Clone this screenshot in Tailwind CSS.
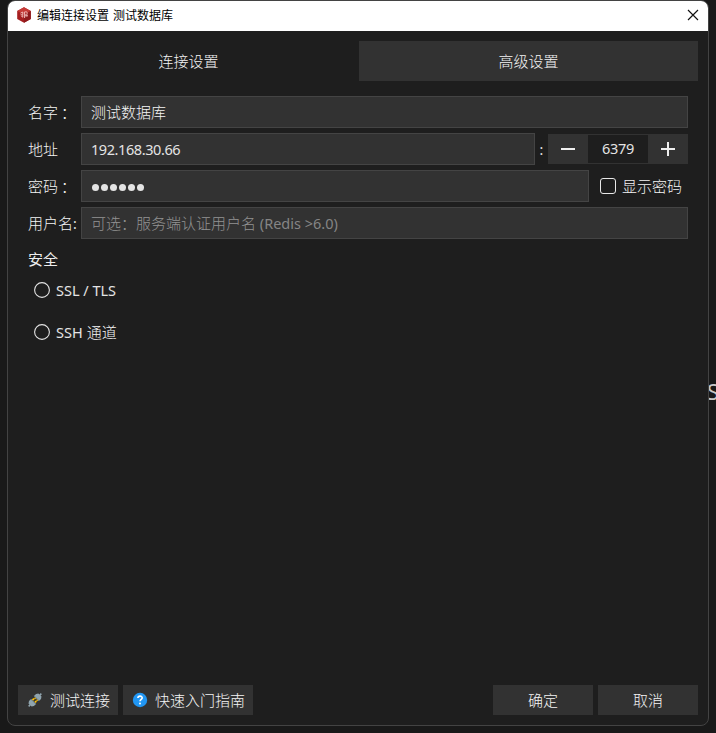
<!DOCTYPE html>
<html lang="zh-CN">
<head>
<meta charset="utf-8">
<title>编辑连接设置 测试数据库</title>
<script src="https://cdn.jsdelivr.net/npm/@tailwindcss/browser@4"></script>
</head>
<body class="relative w-[716px] h-[733px] overflow-hidden bg-[#191919] pl-[7px] font-['Noto_Sans_CJK_SC',sans-serif] text-[15px] font-light leading-5 text-[#f4f4f4]">
<div class="absolute left-[707px] top-[377px] font-['Noto_Sans',sans-serif] text-[22px] font-normal leading-7 text-[#c8c8c8]">S</div>
<main class="relative flex flex-col w-[702px] h-[726px] overflow-hidden rounded-[8px] border border-[#434343] bg-[#1e1e1e]">
  <header class="flex h-[30px] shrink-0 items-center bg-white pb-[2px] pl-2 pr-[9px] font-normal text-black">
    <svg class="size-4" viewBox="0 0 16 16"><path d="M8 .3 14.8 4v8L8 15.8 1.2 12V4Z" fill="#a51f20"/><path d="M8 .3 14.8 4 8 7.5 1.2 4Z" fill="#c53a36"/><path d="M8 7.5 14.8 4v8L8 15.8Z" fill="#8f1a1c"/><path d="M4.5 6.2 6.8 5v5.2L5.2 9M4.6 7.8h2M8.3 5.2c1.4-.8 3-.5 3 .8S9.8 7.8 8.6 8M8.6 5v6M8.8 9.2l2.6-1.3-.6 2" fill="none" stroke="#efb8b5" stroke-width="1"/></svg>
    <h1 class="ml-[5px] flex gap-1 text-[12px] leading-4"><span>编辑连接设置</span><span>测试数据库</span></h1>
    <svg class="ml-auto size-3" viewBox="0 0 12 12"><path d="m1 1 10 10M11 1 1 11" stroke="#111" stroke-width="1.15"/></svg>
  </header>
  <nav class="mx-[10px] mt-[10px] flex h-10 shrink-0">
    <div class="flex w-[341px] items-center justify-center pb-px">连接设置</div>
    <div class="flex flex-1 items-center justify-center bg-[#323232] pb-px">高级设置</div>
  </nav>
  <section class="mt-[15px] ml-5 flex w-[660px] flex-col gap-[5px]">
    <div class="flex h-8 items-center"><span class="w-[53px] whitespace-nowrap">名字<span class="ml-[3px]">：</span></span><div class="flex h-8 flex-1 items-center border border-[#444] bg-[#323232] pl-[9px]">测试数据库</div></div>
    <div class="flex h-8 items-center">
      <span class="w-[53px]">地址</span>
      <div class="flex h-8 w-[454px] items-center border border-[#444] bg-[#323232] pl-[9px] font-['Noto_Sans',sans-serif] text-[14.5px] font-normal tracking-[-0.42px] text-[#e4e4e4]">192.168.30.66</div>
      <span class="w-[13px] pt-0.5 text-center font-['Noto_Sans',sans-serif] text-[14px] font-normal text-[#e4e4e4]">:</span>
      <div class="flex h-[30px] w-[140px] items-center bg-[#323232]">
        <div class="flex w-10 justify-center"><span class="h-0.5 w-[14px] bg-[#eee]"></span></div>
        <div class="flex h-7 w-[60px] items-center justify-center bg-[#1e1e1e] pb-[2px] font-['Noto_Sans',sans-serif] text-[14.5px] font-normal tracking-[-0.25px] text-[#e4e4e4]">6379</div>
        <div class="flex w-10 justify-center"><svg class="size-[14px]" viewBox="0 0 14 14"><path d="M0 7h14M7 0v14" stroke="#eee" stroke-width="2"/></svg></div>
      </div>
    </div>
    <div class="flex h-8 items-center">
      <span class="w-[53px] whitespace-nowrap">密码<span class="ml-[3px]">：</span></span>
      <div class="flex h-8 w-[508px] items-center gap-0.5 border border-[#444] bg-[#323232] pt-[3px] pl-[10px]">
        <i class="size-[7px] rounded-full bg-[#e4e4e4]"></i><i class="size-[7px] rounded-full bg-[#e4e4e4]"></i><i class="size-[7px] rounded-full bg-[#e4e4e4]"></i><i class="size-[7px] rounded-full bg-[#e4e4e4]"></i><i class="size-[7px] rounded-full bg-[#e4e4e4]"></i><i class="size-[7px] rounded-full bg-[#e4e4e4]"></i>
      </div>
      <span class="ml-[11px] size-4 rounded-[3px] border border-[#e8e8e8]"></span>
      <span class="ml-[6px]">显示密码</span>
    </div>
    <div class="flex h-8 items-center"><span class="w-[53px] whitespace-nowrap">用户名<span class="font-['Noto_Sans',sans-serif] text-[14px] font-normal text-[#e4e4e4]">:</span></span><div class="flex h-8 flex-1 items-center border border-[#444] bg-[#323232] pl-[9px] whitespace-pre text-[#939393]">可选：服务端认证用户名<span class="font-['Noto_Sans',sans-serif] text-[14.5px] font-normal text-[#858585]"> (Redis &gt;6.0)</span></div></div>
  </section>
  <h2 class="mt-[10px] ml-5 font-normal text-[#eee]">安全</h2>
  <div class="mt-[11px] ml-[26px] flex h-5 items-center gap-[6px]"><svg class="size-4" viewBox="0 0 16 16"><circle cx="8" cy="8" r="7.4" fill="none" stroke="#e4e4e4" stroke-width="1.1"/></svg><span class="font-['Noto_Sans',sans-serif] text-[14.5px] font-normal text-[#e4e4e4]">SSL / TLS</span></div>
  <div class="mt-[22px] ml-[26px] flex h-5 items-center gap-[6px]"><svg class="size-4" viewBox="0 0 16 16"><circle cx="8" cy="8" r="7.4" fill="none" stroke="#e4e4e4" stroke-width="1.1"/></svg><span class="flex gap-1"><span class="font-['Noto_Sans',sans-serif] text-[14.5px] font-normal text-[#e4e4e4]">SSH</span>通道</span></div>
  <footer class="mt-auto mb-[10px] flex h-[30px] items-center gap-[5px] px-[10px]">
    <div class="flex h-[30px] w-[100px] items-center bg-[#323232] pl-[9px]">
      <svg class="mr-[7px] size-4" viewBox="0 0 16 16"><g transform="rotate(-45 8 8)"><path d="M-1 7.2h2V5.8l2-1.3h3v7H3l-2-1.3V8.8h-2ZM17 7.2h-2V5.8l-2-1.3h-3v7h3l2-1.3V8.8h2Z" fill="#90a4ae"/><path d="M5.7 4.5v7M10.3 4.5v7" stroke="#607d8b" stroke-width=".8"/><path d="M6.2 5.4h2v1.8h-2zM6.2 8.8h2v1.8h-2zM8.6 6H10v1.5H8.6zM8.6 8.9H10v1.5H8.6z" fill="#ffc107"/></g></svg>测试连接</div>
    <div class="flex h-[30px] w-[130px] items-center bg-[#323232] pl-[9px]">
      <svg class="mr-[7px] size-4" viewBox="0 0 16 16"><circle cx="8" cy="8" r="7.2" fill="#2196f3"/><path d="M5.9 6c.1-2.5 4.4-2.5 4.3 0C10.1 7.4 8 7.4 8 9.3" fill="none" stroke="#fff" stroke-width="1.6"/><circle cx="8" cy="11.5" r="1" fill="#fff"/></svg>快速入门指南</div>
    <div class="ml-auto flex h-[30px] w-[100px] items-center justify-center bg-[#323232]">确定</div>
    <div class="flex h-[30px] w-[100px] items-center justify-center bg-[#323232]">取消</div>
  </footer>
</main>
</body>
</html>
